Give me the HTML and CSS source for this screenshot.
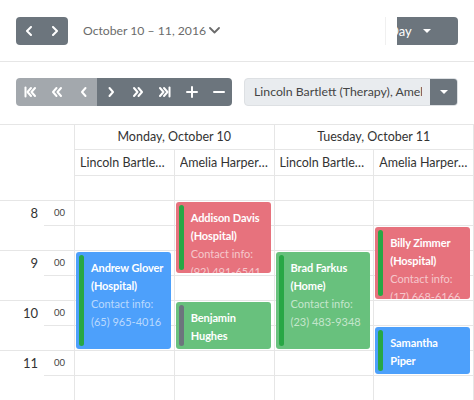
FILE: index.html
```html
<!DOCTYPE html>
<html>
<head>
<meta charset="utf-8">
<link rel="stylesheet" href="styles.css">
</head>
<body>
<div class="app">
  <div class="toolbar top">
    <div class="btn-group nav">
      <button class="btn"><svg width="8" height="10" viewBox="0 0 8 10"><polyline points="6,1 2,5 6,9" /></svg></button>
      <button class="btn"><svg width="8" height="10" viewBox="0 0 8 10"><polyline points="2,1 6,5 2,9" /></svg></button>
    </div>
    <div class="date">October 10 – 11, 2016 <svg class="chev" width="11" height="7" viewBox="0 0 11 7"><polyline points="1,1 5.5,5.5 10,1" /></svg></div>
    <div class="spacer"></div>
    <div class="view-wrap">
      <div class="view-btn"><span class="view-text">Day</span><span class="caret"></span></div>
    </div>
  </div>

  <div class="toolbar second">
    <div class="btn-group pager">
      <button class="btn dis"><svg width="12" height="12" viewBox="0 0 12 12"><line x1="1.5" y1="1.5" x2="1.5" y2="10.5"/><polyline points="7,2 3.5,6 7,10"/><polyline points="11,2 7.5,6 11,10"/></svg></button>
      <button class="btn dis"><svg width="12" height="12" viewBox="0 0 12 12"><polyline points="5.5,2 2,6 5.5,10"/><polyline points="10,2 6.5,6 10,10"/></svg></button>
      <button class="btn dis"><svg width="12" height="12" viewBox="0 0 12 12"><polyline points="7.5,2 4,6 7.5,10"/></svg></button>
      <button class="btn"><svg width="12" height="12" viewBox="0 0 12 12"><polyline points="4.5,2 8,6 4.5,10"/></svg></button>
      <button class="btn"><svg width="12" height="12" viewBox="0 0 12 12"><polyline points="2,2 5.5,6 2,10"/><polyline points="6.5,2 10,6 6.5,10"/></svg></button>
      <button class="btn"><svg width="12" height="12" viewBox="0 0 12 12"><polyline points="1,2 4.5,6 1,10"/><polyline points="5,2 8.5,6 5,10"/><line x1="10.5" y1="1.5" x2="10.5" y2="10.5"/></svg></button>
      <button class="btn"><svg width="12" height="12" viewBox="0 0 12 12"><line x1="6" y1="1" x2="6" y2="11"/><line x1="1" y1="6" x2="11" y2="6"/></svg></button>
      <button class="btn"><svg width="12" height="12" viewBox="0 0 12 12"><line x1="1" y1="6" x2="11" y2="6"/></svg></button>
    </div>
    <div class="select">
      <div class="select-text">Lincoln Bartlett (Therapy), Amelia Harper (Therapy)</div>
      <div class="select-btn"><span class="caret"></span></div>
    </div>
  </div>

  <div class="scheduler">
    <div class="head">
      <div class="corner"></div>
      <div class="cell day d1">Monday, October 10</div>
      <div class="cell day d2">Tuesday, October 11</div>
      <div class="cell res"><span class="res-name">Lincoln Bartlett (Therapy)</span></div>
      <div class="cell res"><span class="res-name">Amelia Harper (Therapy)</span></div>
      <div class="cell res"><span class="res-name">Lincoln Bartlett (Therapy)</span></div>
      <div class="cell res"><span class="res-name">Amelia Harper (Therapy)</span></div>
      <div class="cell allday"></div>
      <div class="cell allday"></div>
      <div class="cell allday"></div>
      <div class="cell allday"></div>
    </div>
    <div class="body">
      <div class="times">
        <div class="hour"><div class="hnum">8</div><div class="hmin">00</div><div class="hrest"></div></div>
        <div class="hour"><div class="hnum">9</div><div class="hmin">00</div><div class="hrest"></div></div>
        <div class="hour"><div class="hnum">10</div><div class="hmin">00</div><div class="hrest"></div></div>
        <div class="hour"><div class="hnum">11</div><div class="hmin">00</div><div class="hrest"></div></div>
      </div>
      <div class="col">
        <div class="slot"></div><div class="slot"></div><div class="slot"></div><div class="slot"></div>
        <div class="slot"></div><div class="slot"></div><div class="slot"></div><div class="slot"></div>
        <div class="event blue" style="top:51px;height:97px">
          <div class="bar"></div>
          <div class="etext"><div class="etitle">Andrew Glover (Hospital)</div><div class="einfo">Contact info:<br>(65) 965-4016</div></div>
        </div>
      </div>
      <div class="col">
        <div class="slot"></div><div class="slot"></div><div class="slot"></div><div class="slot"></div>
        <div class="slot"></div><div class="slot"></div><div class="slot"></div><div class="slot"></div>
        <div class="event red" style="top:1px;height:71px">
          <div class="bar"></div>
          <div class="etext"><div class="etitle">Addison Davis (Hospital)</div><div class="einfo">Contact info:<br>(92) 491-6541</div></div>
        </div>
        <div class="event green" style="top:101px;height:47px">
          <div class="bar gray"></div>
          <div class="etext"><div class="etitle">Benjamin Hughes</div></div>
        </div>
      </div>
      <div class="col">
        <div class="slot"></div><div class="slot"></div><div class="slot"></div><div class="slot"></div>
        <div class="slot"></div><div class="slot"></div><div class="slot"></div><div class="slot"></div>
        <div class="event green" style="top:51px;height:97px">
          <div class="bar"></div>
          <div class="etext"><div class="etitle">Brad Farkus (Home)</div><div class="einfo">Contact info:<br>(23) 483-9348</div></div>
        </div>
      </div>
      <div class="col">
        <div class="slot"></div><div class="slot"></div><div class="slot"></div><div class="slot"></div>
        <div class="slot"></div><div class="slot"></div><div class="slot"></div><div class="slot"></div>
        <div class="event red" style="top:26px;height:72px">
          <div class="bar"></div>
          <div class="etext"><div class="etitle">Billy Zimmer (Hospital)</div><div class="einfo">Contact info:<br>(17) 668-6166</div></div>
        </div>
        <div class="event blue" style="top:126px;height:47px">
          <div class="bar"></div>
          <div class="etext"><div class="etitle">Samantha<br>Piper</div></div>
        </div>
      </div>
    </div>
  </div>
</div>
</body>
</html>
```

FILE: styles.css
```css
* { box-sizing: border-box; }
html, body { margin: 0; padding: 0; background: #fff; }
body {
  font-family: Lato, "Open Sans", "DejaVu Sans", sans-serif;
  color: #333;
  width: 474px;
  height: 400px;
  overflow: hidden;
}
.app { width: 474px; }

.toolbar { display: flex; align-items: center; }
.toolbar.top { height: 62px; padding: 0 16px; border-bottom: 1px solid #e6e6e6; }
.toolbar.second { padding: 16px 16px 18px; }

.btn-group { display: flex; border-radius: 4px; overflow: hidden; height: 28px; }
.btn {
  border: 0; margin: 0; padding: 0;
  background: #6c757d;
  height: 28px;
  display: flex; align-items: center; justify-content: center;
}
.btn svg { fill: none; stroke: #fff; stroke-width: 2; stroke-linecap: round; stroke-linejoin: round; }
.nav .btn { width: 26px; }
.pager .btn { width: 27px; }
.pager .btn.dis { background: #a3a8ad; }

.date {
  margin-left: 15px;
  font-size: 12.2px;
  color: #6b6b6b;
  display: flex; align-items: center; gap: 3px;
}
.chev { fill: none; stroke: #6b6b6b; stroke-width: 1.8; stroke-linecap: round; stroke-linejoin: round; }
.spacer { flex: 1; }

.view-wrap {
  border-left: 1px solid #f0f0f0;
  height: 28px;
  padding-left: 11px;
}
.view-btn {
  width: 61px; height: 28px;
  background: #6c757d;
  border-radius: 0 4px 4px 0;
  overflow: hidden;
  display: flex; align-items: center;
  color: #fff; font-size: 13px;
}
.view-text { margin-left: -8px; }
.caret {
  display: inline-block;
  width: 0; height: 0;
  border-left: 4px solid transparent;
  border-right: 4px solid transparent;
  border-top: 4px solid #fff;
}
.view-btn .caret { margin-left: 11px; }

.select {
  margin-left: 12px;
  width: 214px; height: 28px;
  display: flex;
  background: #e9ecef;
  border: 1px solid #dde0e3;
  border-radius: 4px;
  overflow: hidden;
}
.select-text {
  flex: 1;
  margin: 0 8px 0 9px;
  font-size: 12.3px;
  color: #444;
  line-height: 26px;
  white-space: nowrap;
  overflow: hidden;
}
.select-btn {
  width: 28px; margin: -1px -1px -1px 0;
  background: #6c757d;
  display: flex; align-items: center; justify-content: center;
}

.scheduler { border-top: 1px solid #e6e6e6; }
.head {
  display: grid;
  grid-template-columns: 75px repeat(4, 1fr);
  grid-template-rows: 25px 26px 25px;
}
.corner { grid-row: 1 / 4; border-right: 1px solid #e6e6e6; border-bottom: 1px solid #e6e6e6; }
.cell {
  border-right: 1px solid #e6e6e6;
  border-bottom: 1px solid #e6e6e6;
  font-size: 12.5px;
  white-space: nowrap; overflow: hidden;
}
.day { grid-column: span 2; text-align: center; line-height: 24px; }
.res { padding: 0 4px 0 5px; line-height: 25px; }
.res-name { display: block; overflow: hidden; text-overflow: ellipsis; white-space: nowrap; }

.body { display: flex; }
.times { width: 75px; border-right: 1px solid #e6e6e6; }
.hour {
  height: 50px;
  border-bottom: 1px solid #e6e6e6;
  display: grid;
  grid-template-columns: 44px 31px;
  grid-template-rows: 25px 24px;
}
.hnum {
  grid-row: 1 / 3;
  text-align: right;
  padding-right: 6px;
  font-size: 13px;
  line-height: 25px;
}
.hmin {
  border-bottom: 1px solid #e6e6e6;
  font-size: 9.5px;
  line-height: 24px;
  padding-left: 10px;
  color: #444;
}
.col { flex: 1; position: relative; border-right: 1px solid #e6e6e6; }
.slot { height: 25px; border-bottom: 1px solid #e6e6e6; }

.event {
  position: absolute;
  left: 1px; right: 3px;
  border-radius: 3px;
  display: flex;
  overflow: hidden;
  color: #fff;
}
.event.red { background: #e7727d; }
.event.blue { background: #4da0fb; }
.event.green { background: #68c17d; }
.bar {
  flex: none;
  width: 5px;
  margin: 3px 0 3px 3px;
  border-radius: 3px;
  background: #28a745;
}
.bar.gray { background: #6c757d; }
.etext {
  padding: 7px 1px 0 7px;
  font-size: 11px;
  line-height: 18px;
}
.etitle { font-weight: 700; letter-spacing: -0.1px; }
.einfo { color: rgba(255,255,255,0.62); }
```
